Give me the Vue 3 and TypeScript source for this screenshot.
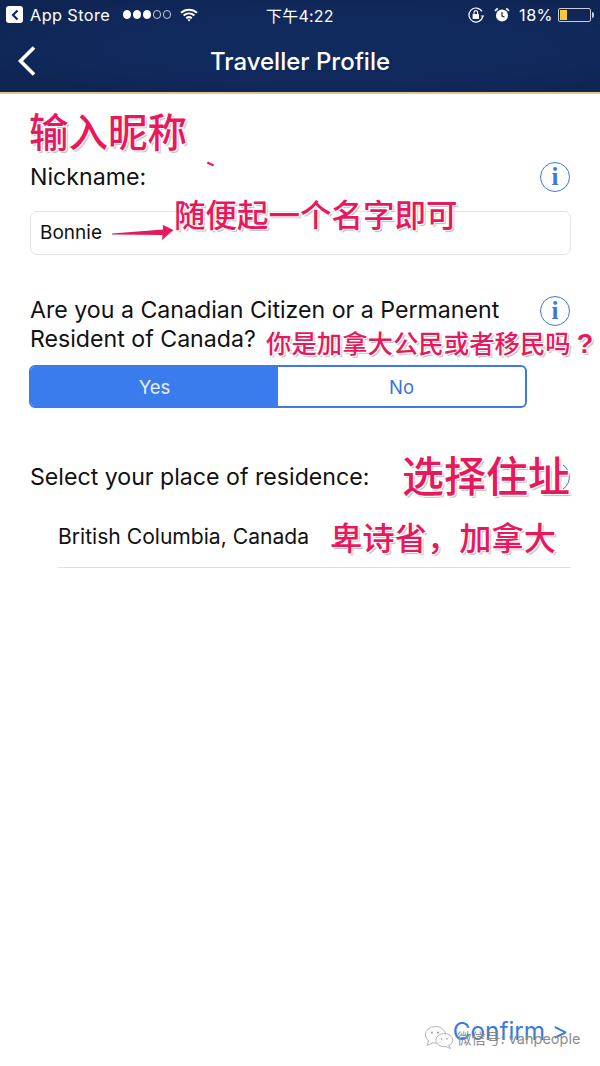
<script setup lang="ts">
const dots: boolean[] = [true, true, true, false, false]
</script>

<template>
  <div class="page">
    <header class="header">
      <div class="status">
        <div class="status-left">
          <span class="app-back">
            <svg width="10" height="12" viewBox="0 0 10 12"><path d="M7.5 1.5 3 6l4.500 4.500" fill="none" stroke="#12295a" stroke-width="2.200" /></svg>
          </span>
          <span class="status-text">App Store</span>
          <span class="signal">
            <i v-for="(on, n) in dots" :key="n" class="dot" :class="{ on }"></i>
          </span>
          <svg class="wifi" width="18" height="14" viewBox="0 0 18 14">
            <path d="M1 4.800C5.500.6 12.500.6 17 4.800M3.600 7.600c3.200-2.800 7.600-2.800 10.800 0M6.200 10.200c1.700-1.300 3.900-1.300 5.600 0" fill="none" stroke="#fff" stroke-width="2" />
            <path d="M7.300 11.700 9 13.500l1.700-1.800c-1-.7-2.400-.7-3.400 0z" fill="#fff" />
          </svg>
        </div>
        <span class="clock">下午4:22</span>
        <div class="status-right">
          <svg width="18" height="18" viewBox="0 0 18 18">
            <path d="M15.800 10.500A7 7 0 1 1 15 5.500" fill="none" stroke="#fff" stroke-width="1.200" />
            <path d="M13.700 9.500h3.600l-1.800 2.200z" fill="#fff" />
            <rect x="5.600" y="8" width="6.400" height="5" rx=".6" fill="#fff" />
            <path d="M7 8V6.400a1.800 1.800 0 0 1 3.600 0V8" fill="none" stroke="#fff" stroke-width="1.100" />
          </svg>
          <svg width="16" height="16" viewBox="0 0 16 16">
            <circle cx="8" cy="8.600" r="6" fill="#fff" />
            <path d="M8 5v4l2.500 1" fill="none" stroke="#12295a" stroke-width="1.200" />
            <path d="M1 3.800 3.800 1.400M15 3.800l-2.800-2.400" stroke="#fff" stroke-width="1.700" />
          </svg>
          <span class="status-text battery-text">18%</span>
          <span class="battery"><span class="battery-fill"></span></span>
        </div>
      </div>
      <div class="nav">
        <svg class="back" width="22" height="34" viewBox="0 0 22 34">
          <path d="M18 3.500 4.500 17 18 30.500" fill="none" stroke="#fff" stroke-width="3.600" />
        </svg>
        <h1 class="title">Traveller Profile</h1>
      </div>
    </header>

    <main class="content">
      <section class="nick">
        <div class="label-row">
          <label class="label">Nickname:</label>
          <span class="info">i</span>
        </div>
        <div class="input">Bonnie</div>
      </section>

      <section class="citizen">
        <div class="label-row top">
          <p class="label question">Are you a Canadian Citizen or a Permanent Resident of Canada?</p>
          <span class="info">i</span>
        </div>
        <div class="toggle">
          <span class="opt active">Yes</span>
          <span class="opt">No</span>
        </div>
      </section>

      <section class="residence">
        <div class="label-row">
          <p class="label">Select your place of residence:</p>
          <span class="info">i</span>
        </div>
        <div class="place">British Columbia, Canada</div>
      </section>
    </main>

    <footer class="footer">Confirm &gt;</footer>

    <span class="note n1">输入昵称</span>
    <span class="speck"></span>
    <span class="note n2">随便起一个名字即可</span>
    <svg class="arrow" width="64" height="18" viewBox="0 0 64 18">
      <path d="M1 9.500 52 5.500 52 1 62.500 6 51 16 51.500 11 1 10.500z" fill="#e8185d" />
    </svg>
    <span class="note n3">你是加拿大公民或者移民吗<span class="q">?</span></span>
    <span class="note n4">选择住址</span>
    <span class="note n5">卑诗省，加拿大</span>

    <div class="wechat">
      <svg width="30" height="25" viewBox="0 0 34 28">
        <ellipse cx="13" cy="11" rx="11.500" ry="9.500" fill="#fff" fill-opacity=".6" stroke="#aaa" stroke-width="1" />
        <path d="M5 17.500 4 23l6-3" fill="#fff" stroke="#aaa" stroke-width="1" />
        <ellipse cx="23" cy="17" rx="9.500" ry="7.500" fill="#fff" fill-opacity=".7" stroke="#aaa" stroke-width="1" />
        <path d="M28 23l2 3.500-5.500-2.200" fill="#fff" stroke="#aaa" stroke-width="1" />
        <circle cx="9" cy="8.500" r="1.300" fill="#aaa" />
        <circle cx="16" cy="8.500" r="1.300" fill="#aaa" />
        <circle cx="20" cy="15.500" r="1" fill="#aaa" />
        <circle cx="26" cy="15.500" r="1" fill="#aaa" />
      </svg>
      <span>微信号: vanpeople</span>
    </div>
  </div>
</template>

<style>
html, body { margin: 0; background: #fff; }
</style>

<style scoped>
.page {
  position: relative;
  width: 600px;
  height: 1066px;
  overflow: hidden;
  background: #fff;
  display: flex;
  flex-direction: column;
  font-family: Inter, "Noto Sans CJK SC", sans-serif;
  color: #111;
}
.header {
  height: 92px;
  flex: none;
  background: radial-gradient(ellipse at 55% 50%, #112b60 0%, #10285a 60%, #0e2450 100%);
  border-bottom: 2px solid #e3c586;
  box-sizing: content-box;
  color: #fff;
}
.status {
  position: relative;
  display: flex;
  align-items: center;
  justify-content: space-between;
  height: 29px;
  padding: 0 9px 0 6px;
}
.status-left, .status-right { display: flex; align-items: center; }
.app-back {
  width: 17px;
  height: 17px;
  border-radius: 3px;
  background: #fff;
  display: flex;
  align-items: center;
  justify-content: center;
  margin-right: 7px;
}
.status-text { font-size: 16.300px; letter-spacing: .4px; }
.signal { display: flex; gap: 1.800px; margin-left: 13px; margin-right: 9px; }
.dot {
  width: 8.200px;
  height: 8.200px;
  box-sizing: border-box;
  border: 1px solid #fff;
  border-radius: 50%;
  opacity: .75;
}
.dot.on { background: #fff; opacity: 1; }
.clock {
  position: absolute;
  left: 266px;
  font-size: 16px;
  letter-spacing: .2px;
}
.status-right { gap: 9px; }
.battery-text { margin-left: 0; margin-right: -4px; }
.battery {
  width: 33px;
  height: 14px;
  box-sizing: border-box;
  border: 1px solid #c6ccd8;
  border-radius: 2px;
  position: relative;
  padding: 1px;
}
.battery::after {
  content: "";
  position: absolute;
  right: -4px;
  top: 3px;
  width: 2px;
  height: 6px;
  background: #c6ccd8;
  border-radius: 0 2px 2px 0;
}
.battery-fill { display: block; width: 7px; height: 100%; background: #f6c93f; }
.nav {
  position: relative;
  height: 63px;
  display: flex;
  align-items: center;
  justify-content: center;
}
.back { position: absolute; left: 16px; top: 15px; }
.title { margin: 1px 0 0; font-size: 24px; font-weight: 500; letter-spacing: 0; }

.content { padding: 0 29px 0 30px; flex: 1; }
.nick { padding-top: 64px; }
.label-row {
  display: flex;
  justify-content: space-between;
  align-items: center;
  height: 38px;
}
.label-row.top { align-items: flex-start; height: auto; }
.label { margin: 0; font-size: 23.150px; line-height: 29px; font-weight: 400; letter-spacing: 0; }
.info {
  flex: none;
  width: 30px;
  height: 30px;
  margin-right: 1px;
  box-sizing: border-box;
  border: 1.500px solid #3f78d8;
  border-radius: 50%;
  color: #3f78d8;
  font-family: "Liberation Serif", serif;
  font-size: 25px;
  font-weight: 700;
  line-height: 27px;
  text-align: center;
}
.input {
  margin-top: 15px;
  height: 44px;
  box-sizing: border-box;
  border: 1px solid #e4e4e4;
  border-radius: 7px;
  padding-left: 9px;
  font-size: 19px;
  line-height: 42px;
}
.citizen { padding-top: 41px; }
.question { width: 490px; }
.toggle {
  display: flex;
  width: 498px;
  height: 43px;
  margin-top: 11px;
  margin-left: -1px;
  box-sizing: border-box;
  border: 2px solid #3e7ae0;
  border-radius: 6px;
  overflow: hidden;
  font-size: 18.500px;
}
.opt {
  flex: 1;
  display: flex;
  align-items: center;
  justify-content: center;
  color: #3b74d8;
}
.opt.active { background: #3a7bee; color: #e8f0ff; }
.residence { padding-top: 50px; }
.place {
  margin-left: 28px;
  margin-top: 28px;
  padding-bottom: 17px;
  border-bottom: 1px solid #e2e2e2;
  font-size: 21.100px;
  line-height: 26px;
}
.footer {
  position: absolute;
  right: 32px;
  top: 1016px;
  font-size: 24.300px;
  color: #3d78e0;
}

.note {
  position: absolute;
  white-space: nowrap;
  font-family: "Noto Sans CJK SC", sans-serif;
  color: #e8185d;
  font-weight: 500;
  line-height: 1;
  text-shadow: 1px 1px 0 #fff, -1px -1px 0 #fff, 1px -1px 0 #fff, -1px 1px 0 #fff, 2px 2px 1px #bdbdbd;
}
.n1 { left: 29px; top: 110px; font-size: 39.500px; }
.n2 { left: 174px; top: 198px; font-size: 31.500px; }
.n3 { left: 266px; top: 330px; font-size: 25.400px; }
.q { margin-left: 6px; font-family: "Liberation Sans", sans-serif; font-size: 27px; font-weight: 700; }
.n4 {
  left: 402px;
  top: 453px;
  font-size: 42px;
  background: linear-gradient(90deg, #fff 161px, transparent 161px);
}
.n5 { left: 330px; top: 520px; font-size: 32.300px; }
.arrow { position: absolute; left: 111px; top: 224px; }
.speck {
  position: absolute;
  left: 207px;
  top: 163px;
  width: 7px;
  height: 2px;
  background: #e8185d;
  transform: rotate(25deg);
}
.wechat {
  position: absolute;
  left: 424px;
  top: 1025px;
  display: flex;
  align-items: center;
  gap: 3px;
  font-size: 14.500px;
  color: #8d8d8d;
  white-space: nowrap;
}
</style>
